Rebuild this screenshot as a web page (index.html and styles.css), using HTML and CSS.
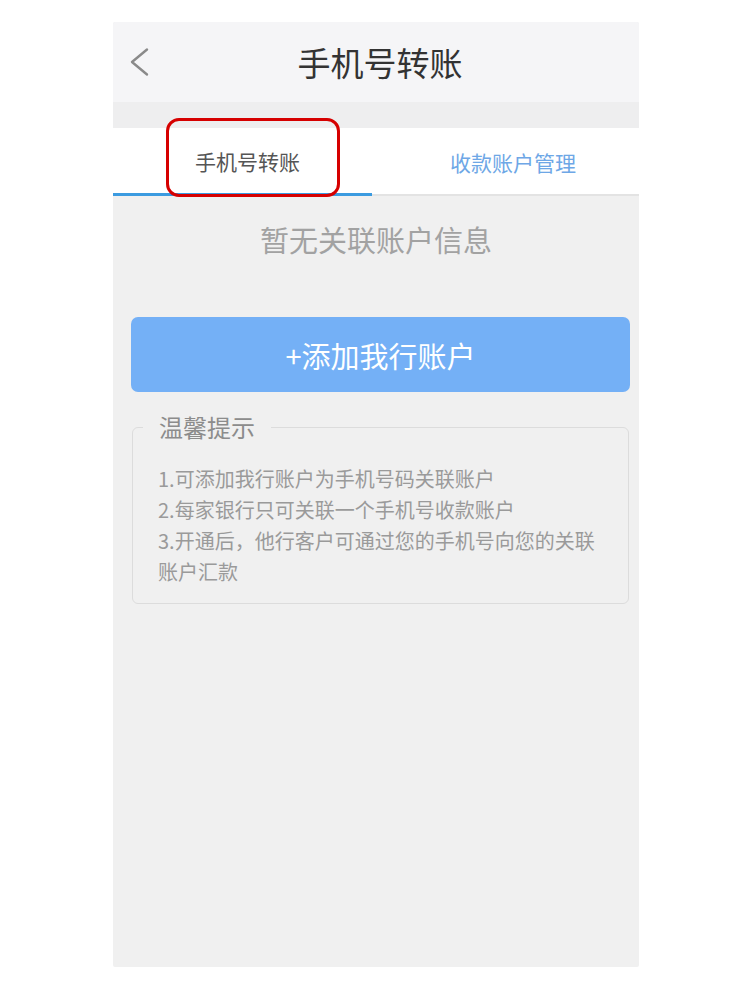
FILE: index.html
```html
<!DOCTYPE html>
<html lang="zh-CN">
<head>
<meta charset="utf-8">
<title>手机号转账</title>
<link rel="stylesheet" href="styles.css">
</head>
<body>
<div class="phone">
  <header class="nav">
    <div class="nav-back">
      <svg width="20" height="30" viewBox="0 0 20 30" aria-hidden="true">
        <polyline points="17,2.5 2,15 17,27.5" fill="none" stroke="#8a8a8a" stroke-width="2.4" stroke-linecap="round" stroke-linejoin="round"/>
      </svg>
    </div>
    <h1 class="nav-title">手机号转账</h1>
    <div class="nav-side"></div>
  </header>
  <div class="strip"></div>
  <nav class="tabs">
    <div class="tab tab-active">手机号转账</div>
    <div class="tab tab-other">收款账户管理</div>
    <div class="highlight"></div>
  </nav>
  <div class="empty">暂无关联账户信息</div>
  <div class="actions">
    <button class="add-btn">+添加我行账户</button>
  </div>
  <fieldset class="tips">
    <legend class="tips-title">温馨提示</legend>
    <div class="tips-body">
      <p>1.可添加我行账户为手机号码关联账户</p>
      <p>2.每家银行只可关联一个手机号收款账户</p>
      <p>3.开通后，他行客户可通过您的手机号向您的关联账户汇款</p>
    </div>
  </fieldset>
</div>
</body>
</html>
```

FILE: styles.css
```css
html, body {
  margin: 0;
  padding: 0;
  background: #ffffff;
}

body {
  font-family: "Noto Sans CJK SC", "Noto Sans", sans-serif;
  padding: 22px 0 0 113px;
}

.phone {
  position: relative;
  width: 526px;
  height: 945px;
  background: #f0f0f0;
  border-radius: 2px;
  overflow: hidden;
}

.nav {
  height: 80px;
  background: #f5f5f7;
  display: grid;
  grid-template-columns: 1fr auto 1fr;
  align-items: center;
}

.nav-back {
  padding-left: 17px;
  display: flex;
  align-items: center;
}

.nav-back svg {
  display: block;
}

.nav-title {
  margin: 0;
  padding-left: 8px;
  font-size: 33px;
  font-weight: 400;
  color: #333333;
  line-height: 44px;
}

.strip {
  height: 26px;
  background: #eeeeef;
}

.tabs {
  position: relative;
  height: 68px;
  background: #ffffff;
  display: grid;
  grid-template-columns: 259px 1fr;
}

.tab {
  box-sizing: border-box;
  display: flex;
  align-items: center;
  justify-content: center;
  font-size: 21px;
  line-height: 30px;
}

.tab-active {
  color: #555555;
  border-bottom: 3px solid #3b9be0;
  padding: 0 0 0 10px;
}

.tab-other {
  color: #6ea7e6;
  border-bottom: 2px solid #e3e3e3;
  padding: 1px 0 0 15px;
}

.highlight {
  position: absolute;
  left: 53px;
  top: -10px;
  width: 174px;
  height: 79px;
  box-sizing: border-box;
  border: 3px solid #d60000;
  border-radius: 13px;
}

.empty {
  height: 94px;
  box-sizing: border-box;
  padding-top: 23px;
  text-align: center;
  font-size: 29px;
  line-height: 40px;
  color: #a2a2a2;
}

.actions {
  padding: 27px 9px 0 18px;
}

.add-btn {
  display: block;
  width: 100%;
  height: 75px;
  border: none;
  border-radius: 7px;
  background: #74b0f6;
  color: #ffffff;
  font-family: inherit;
  font-size: 29px;
  line-height: 40px;
  padding: 0;
}

.tips {
  margin: 23px 10px 0 19px;
  padding: 0 25px 16px 25px;
  border: 1px solid #dcdcdc;
  border-radius: 6px;
  min-width: 0;
}

.tips-title {
  margin-left: -15px;
  padding: 0 16px;
  font-size: 24px;
  line-height: 24px;
  color: #8c8c8c;
}

.tips-body {
  padding-top: 24px;
}

.tips-body p {
  margin: 0;
  font-size: 20px;
  line-height: 31px;
  color: #9a9a9a;
}
```
